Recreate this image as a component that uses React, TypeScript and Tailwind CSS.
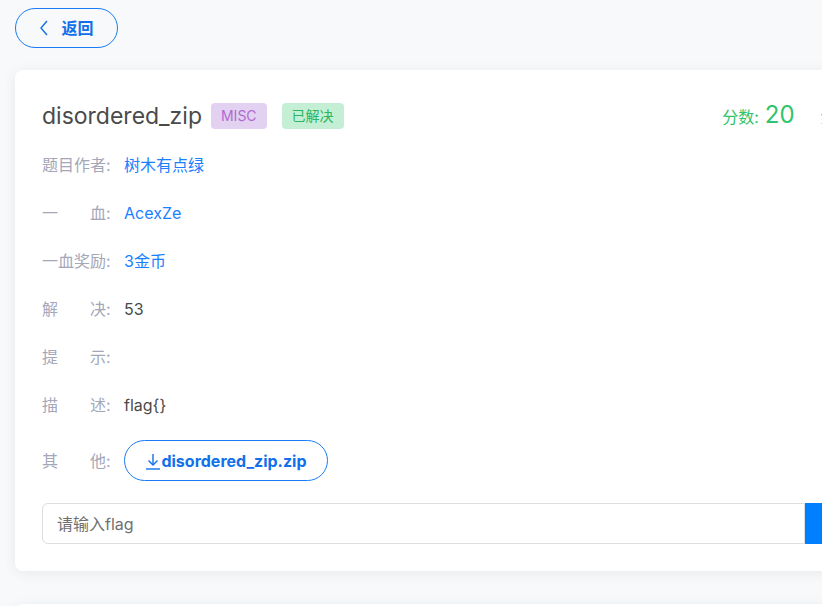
import React from "react";

const font = { fontFamily: "Inter, 'Noto Sans CJK SC', sans-serif" };

const rows: { label: string; value?: string; tone?: "link" | "text" }[] = [
  { label: "题目作者", value: "树木有点绿", tone: "link" },
  { label: "一血", value: "AcexZe", tone: "link" },
  { label: "一血奖励", value: "3金币", tone: "link" },
  { label: "解决", value: "53", tone: "text" },
  { label: "提示" },
  { label: "描述", value: "flag{}", tone: "text" },
];

// label is justified over 4 chars, colon sticks to the last one
const Label = ({ text }: { text: string }) => (
  <span className="flex w-[82px] shrink-0 text-[#a4a7b9]">
    <span className="w-16 [text-align-last:justify]">{text}</span>
    <span>:</span>
  </span>
);

export default function App() {
  return (
    <div className="w-full min-h-screen overflow-hidden bg-[#f8f9fa]" style={font}>
      <div className="w-[920px] px-[15px] pt-2">
        <button className="flex h-10 w-[103px] items-center justify-center gap-3 rounded-full border border-[#1a7cf5] bg-transparent text-base font-bold text-[#1170ea]">
          <svg width="10" height="16" viewBox="0 0 10 16" fill="none" stroke="currentColor" strokeWidth="1.4">
            <polyline points="8,1 2,8 8,15" />
          </svg>
          <span>返回</span>
        </button>

        {/* challenge card */}
        <div className="mt-[22px] w-[890px] rounded-lg bg-white px-[27px] pt-[26px] pb-[27px] shadow-[0_2px_14px_rgba(0,0,0,0.07)]">
          <div className="flex h-10 items-center">
            <h1 className="text-[23px] leading-none text-[#4a4a4a]">disordered_zip</h1>
            <span className="ml-[9px] rounded bg-[#e3d1f1] px-[10px] py-[3px] text-sm text-[#b06ad0]">MISC</span>
            <span className="ml-[15px] rounded bg-[#c4efd5] px-[10px] py-[3px] text-sm text-[#2bb562]">已解决</span>
            <div className="ml-auto flex items-baseline">
              <span className="text-base text-[#2fc46d]">分数:</span>
              <span className="ml-[6px] text-2xl leading-none text-[#2fc46d]">20</span>
              <span className="ml-[26px] text-base text-[#f39c12]">金币:</span>
              <span className="ml-[6px] text-2xl leading-none text-[#f39c12]">3</span>
            </div>
          </div>

          <div className="mt-[5px] text-base">
            {rows.map((r) => (
              <div key={r.label} className="flex h-12 items-center">
                <Label text={r.label} />
                {r.value && (
                  <span className={r.tone === "link" ? "text-[#1a80ff]" : "text-[#4a4a4a]"}>{r.value}</span>
                )}
              </div>
            ))}
            <div className="flex items-center pt-[11px]">
              <Label text="其他" />
              <button className="flex h-[41px] w-[204px] items-center justify-center rounded-full border border-[#1a7cf5] text-base font-bold text-[#1170ea]">
                <svg width="16" height="18" viewBox="0 0 16 18" fill="none" stroke="currentColor" strokeWidth="1.4">
                  <line x1="8" y1="2" x2="8" y2="13" />
                  <polyline points="3.5,8.5 8,13 12.5,8.5" />
                  <line x1="1" y1="17" x2="15" y2="17" />
                </svg>
                <span>disordered_zip.zip</span>
              </button>
            </div>
          </div>

          <div className="mt-[22px] flex h-[41px]">
            <input
              placeholder="请输入flag"
              className="flex-1 rounded-l-md border border-[#dedede] px-[14px] text-base text-[#555] outline-none placeholder:text-[#707070]"
              style={font}
            />
            <button className="w-[73px] rounded-r-md bg-[#0080ff] text-base text-white">提交</button>
          </div>
        </div>

        <div className="mt-[33px] h-40 w-[890px] rounded-lg bg-white shadow-[0_2px_14px_rgba(0,0,0,0.07)]" />
      </div>
    </div>
  );
}
